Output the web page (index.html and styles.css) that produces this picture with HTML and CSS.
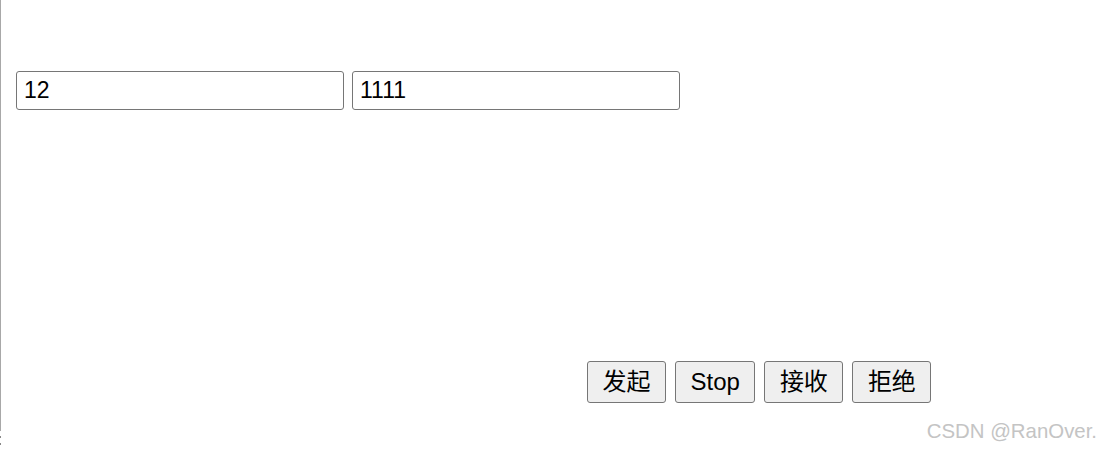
FILE: index.html
```html
<!DOCTYPE html>
<html lang="zh">
<head>
<meta charset="utf-8">
<link rel="stylesheet" href="styles.css">
</head>
<body>
<div class="page">
  <div class="inputs">
    <input class="field" type="text" value="12">
    <input class="field" type="text" value="1111">
  </div>
  <div class="actions">
    <button class="btn">发起</button>
    <button class="btn">Stop</button>
    <button class="btn">接收</button>
    <button class="btn">拒绝</button>
  </div>
  <span class="dot dot-a"></span>
  <span class="dot dot-b"></span>
</div>
<div class="watermark">CSDN @RanOver.</div>
</body>
</html>
```

FILE: styles.css
```css
html, body {
  margin: 0;
  padding: 0;
  background: #ffffff;
  width: 1102px;
  height: 452px;
  overflow: hidden;
  font-family: "Liberation Sans", Arial, "Noto Sans CJK SC", sans-serif;
}

.page {
  position: relative;
  height: 431px;
  border-left: 1px solid #a8a8a8;
  padding: 71px 0 0 15px;
  box-sizing: border-box;
}

.inputs {
  display: flex;
  gap: 8px;
}

.field {
  box-sizing: border-box;
  width: 328px;
  height: 39px;
  margin: 0;
  padding: 0 7px;
  border: 1px solid #767676;
  border-radius: 3px;
  font-family: "Liberation Sans", Arial, sans-serif;
  font-size: 23px;
  color: #000;
  background: #fff;
}

.actions {
  display: flex;
  gap: 9px;
  margin: 251px 0 0 571px;
}

.btn {
  box-sizing: border-box;
  height: 42px;
  margin: 0;
  padding: 0 14.5px;
  border: 1px solid #767676;
  border-radius: 3px;
  background: #efefef;
  color: #000;
  font-family: "Liberation Sans", Arial, "Noto Sans CJK SC", sans-serif;
  font-size: 24px;
  line-height: 1;
}

.dot {
  position: absolute;
  left: -1px;
  width: 1px;
  height: 2px;
  background: #888;
}

.dot-a { top: 436px; }
.dot-b { top: 443px; }

.watermark {
  position: absolute;
  right: 5px;
  top: 420px;
  font-family: "Liberation Sans", Arial, sans-serif;
  font-size: 20.4px;
  color: #c4c4c4;
}
```
